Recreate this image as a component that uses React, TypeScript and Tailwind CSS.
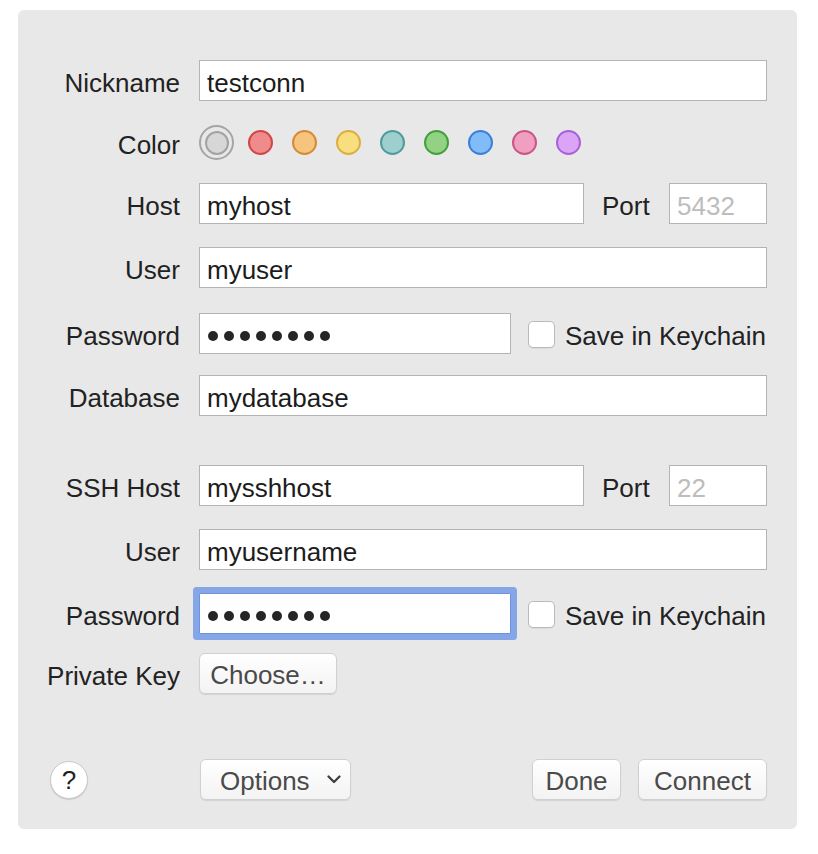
import type { ReactNode } from "react";

const font = { fontFamily: '"Liberation Sans", Arial, sans-serif' };

type RowProps = {
	label: string;
	className?: string;
	children: ReactNode;
};

function Row({ label, className = "", children }: RowProps) {
	return (
		<div className={`flex h-[41px] items-stretch ${className}`}>
			<div className="h-[41px] w-[162px] shrink-0 pt-[5px] text-right leading-[36px] text-[#222]">
				{label}
			</div>
			<div className="ml-[19px] flex flex-1 items-center pr-[30px]">
				{children}
			</div>
		</div>
	);
}

type FieldProps = {
	value?: string;
	placeholder?: string;
	className?: string;
};

function Field({ value = "", placeholder, className = "" }: FieldProps) {
	return (
		<input
			readOnly
			value={value}
			placeholder={placeholder}
			className={`h-[41px] min-w-0 border border-[#b4b4b4] bg-white px-[7px] pt-[5px] text-[26px] leading-[34px] text-[#1c1c1c] outline-none placeholder:text-[#bdbdbd] ${className}`}
			style={font}
		/>
	);
}

function Dots() {
	return (
		<div className="flex gap-[6px]">
			{[0, 1, 2, 3, 4, 5, 6, 7].map((i) => (
				<span key={i} className="size-[10px] rounded-full bg-[#262626]" />
			))}
		</div>
	);
}

function PasswordField({ focused = false }: { focused?: boolean }) {
	return (
		<div
			className={
				focused
					? "flex h-[41px] w-[312px] items-center rounded-[1px] border border-[#6f93dc] bg-white pt-[5px] pl-[8px] shadow-[0_0_0_6px_#85a7e8]"
					: "flex h-[41px] w-[312px] items-center border border-[#b4b4b4] bg-white pt-[5px] pl-[8px]"
			}
		>
			<Dots />
		</div>
	);
}

function Keychain() {
	return (
		<div className="ml-[17px] flex items-center">
			<span className="mt-[2px] size-[27px] rounded-[5px] border border-[#bababa] bg-white shadow-[0_1px_1px_rgba(0,0,0,0.06)]" />
			<span className="ml-[10px] pt-[5px] text-[#222]">Save in Keychain</span>
		</div>
	);
}

function Button({
	children,
	className = "",
}: {
	children: ReactNode;
	className?: string;
}) {
	return (
		<button
			type="button"
			className={`flex h-[41px] items-center rounded-[6px] border border-[#d0d0d0] bg-linear-to-b from-white to-[#f3f3f3] pt-[3px] text-[26px] text-[#4a4a4a] shadow-[0_1px_1px_rgba(0,0,0,0.1)] ${className}`}
			style={font}
		>
			{children}
		</button>
	);
}

const swatches = [
	{ fill: "#f08b8b", ring: "#d04545" },
	{ fill: "#f6c47f", ring: "#d68b33" },
	{ fill: "#f8de7e", ring: "#d9b03f" },
	{ fill: "#9dcfcf", ring: "#4f9a9b" },
	{ fill: "#93d283", ring: "#40a03d" },
	{ fill: "#81bbf8", ring: "#3a80d8" },
	{ fill: "#f09fc1", ring: "#c95686" },
	{ fill: "#dca4f6", ring: "#a862d8" },
];

export default function App() {
	return (
		<div className="h-[854px] w-[818px] bg-white pt-[10px] pl-[18px]" style={font}>
			<div className="h-[819px] w-[779px] rounded-[6px] bg-[#e8e8e8] pt-[50px] text-[26px]">
				<Row label="Nickname">
					<Field value="testconn" className="flex-1" />
				</Row>

				<Row label="Color" className="mt-[21px]">
					<div className="flex items-center">
						<span className="flex size-[35px] items-center justify-center rounded-full border-[2.5px] border-[#a5a5a5]">
							<span className="size-[24px] rounded-full border-2 border-[#a3a3a3] bg-[#d7d7d7]" />
						</span>
						<div className="ml-[14px] flex gap-[19px]">
							{swatches.map((s) => (
								<span
									key={s.fill}
									className="size-[25px] rounded-full border-2"
									style={{ backgroundColor: s.fill, borderColor: s.ring }}
								/>
							))}
						</div>
					</div>
				</Row>

				<Row label="Host" className="mt-[20px]">
					<Field value="myhost" className="w-[385px]" />
					<span className="ml-[18px] pt-[5px] text-[#222]">Port</span>
					<Field placeholder="5432" className="ml-auto w-[98px]" />
				</Row>

				<Row label="User" className="mt-[23px]">
					<Field value="myuser" className="flex-1" />
				</Row>

				<Row label="Password" className="mt-[25px]">
					<PasswordField />
					<Keychain />
				</Row>

				<Row label="Database" className="mt-[21px]">
					<Field value="mydatabase" className="flex-1" />
				</Row>

				<Row label="SSH Host" className="mt-[49px]">
					<Field value="mysshhost" className="w-[385px]" />
					<span className="ml-[18px] pt-[5px] text-[#222]">Port</span>
					<Field placeholder="22" className="ml-auto w-[98px]" />
				</Row>

				<Row label="User" className="mt-[23px]">
					<Field value="myusername" className="flex-1" />
				</Row>

				<Row label="Password" className="mt-[23px]">
					<PasswordField focused />
					<Keychain />
				</Row>

				<Row label="Private Key" className="mt-[19px]">
					<Button className="w-[138px] justify-center">Choose…</Button>
				</Row>

				<div className="mt-[65px] flex h-[41px] items-center pr-[30px]">
					<span className="ml-[32px] flex size-[38px] items-center justify-center rounded-full border border-[#c9c9c9] bg-white pt-[2px] text-[26px] font-medium text-[#1e1e1e] shadow-[0_1px_1px_rgba(0,0,0,0.12)]">
						?
					</span>
					<Button className="ml-[112px] w-[151px] pl-[19px]">
						<span>Options</span>
						<svg
							className="mb-[3px] ml-auto mr-[9px]"
							width="14"
							height="9"
							viewBox="0 0 14 9"
							fill="none"
						>
							<path
								d="M1.5 1.5L7 7L12.5 1.5"
								stroke="#3c3c3c"
								strokeWidth="2.2"
								strokeLinecap="round"
								strokeLinejoin="round"
							/>
						</svg>
					</Button>
					<Button className="ml-auto w-[89px] justify-center">Done</Button>
					<Button className="ml-[17px] w-[129px] justify-center">Connect</Button>
				</div>
			</div>
		</div>
	);
}
